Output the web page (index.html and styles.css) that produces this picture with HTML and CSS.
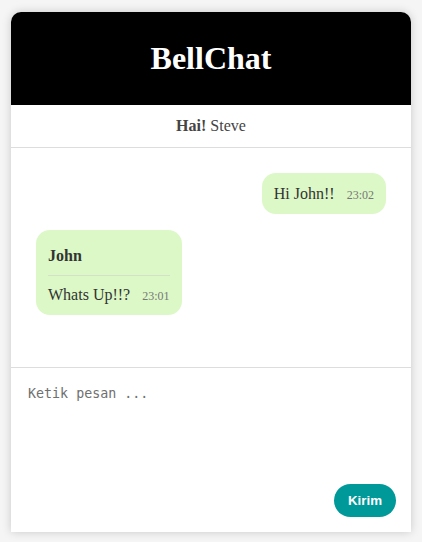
FILE: index.html
```html
<!DOCTYPE html>
<html lang="id">
<head>
<meta charset="utf-8">
<title>BellChat</title>
<link rel="stylesheet" href="styles.css">
</head>
<body>
<div class="card">
  <header class="header"><h1 class="title">BellChat</h1></header>
  <div class="greet"><span><b>Hai!</b> Steve</span></div>
  <div class="chat">
    <div class="bubble me">
      <span class="text">Hi John!!</span><span class="time">23:02</span>
    </div>
    <div class="bubble other">
      <div class="name">John</div>
      <div class="body"><span class="text">Whats Up!!?</span><span class="time">23:01</span></div>
    </div>
  </div>
  <div class="compose">
    <textarea class="input" placeholder="Ketik pesan ..."></textarea>
    <div class="actions"><button class="send">Kirim</button></div>
  </div>
</div>
</body>
</html>
```
FILE: styles.css
```css
html, body { margin: 0; padding: 0; }
body {
  background: #f5f5f5;
  font-family: "Liberation Serif", "Times New Roman", serif;
  width: 422px;
  height: 542px;
  overflow: hidden;
}
.card {
  margin: 12px 11px 0;
  width: 400px;
  background: #fff;
  border-radius: 10px 10px 0 0;
  box-shadow: 0 0 10px rgba(0,0,0,0.18);
  display: flex;
  flex-direction: column;
}
.header {
  background: #000;
  height: 93px;
  border-radius: 10px 10px 0 0;
  display: flex;
  align-items: center;
  justify-content: center;
}
.title {
  margin: 0;
  color: #fff;
  font-size: 32px;
  font-weight: bold;
}
.greet {
  height: 42px;
  border-bottom: 1px solid #ddd;
  display: flex;
  align-items: center;
  justify-content: center;
  font-size: 16px;
  color: #444;
}
.chat {
  height: 220px;
  border-bottom: 1px solid #ddd;
  padding: 25px 25px 0;
  box-sizing: border-box;
  display: flex;
  flex-direction: column;
  gap: 16px;
}
.bubble {
  background: #dcf8c6;
  border-radius: 14px;
  padding: 12px 12px;
  color: #333;
  font-size: 16px;
  line-height: 17px;
}
.me { align-self: flex-end; }
.other { align-self: flex-start; }
.time {
  font-size: 12px;
  line-height: 12px;
  color: #777;
  margin-left: 12px;
}
.name {
  font-weight: bold;
  padding: 5px 0 11px;
  border-bottom: 1px solid #ccc8;
  margin-bottom: 10px;
}
.compose {
  height: 164px;
  display: flex;
  flex-direction: column;
}
.input {
  flex: 1;
  border: none;
  outline: none;
  resize: none;
  padding: 18px 17px;
  font-family: "DejaVu Sans Mono", monospace;
  font-size: 13.33px;
  color: #333;
  background: transparent;
}
.input::placeholder { color: #707070; }
.actions {
  display: flex;
  justify-content: flex-end;
  padding: 0 15px 15px;
}
.send {
  background: #009999;
  color: #fff;
  border: none;
  border-radius: 17px;
  height: 33px;
  padding: 0 14px;
  font-family: "Liberation Sans", Arial, sans-serif;
  font-weight: bold;
  font-size: 13.33px;
}
```
